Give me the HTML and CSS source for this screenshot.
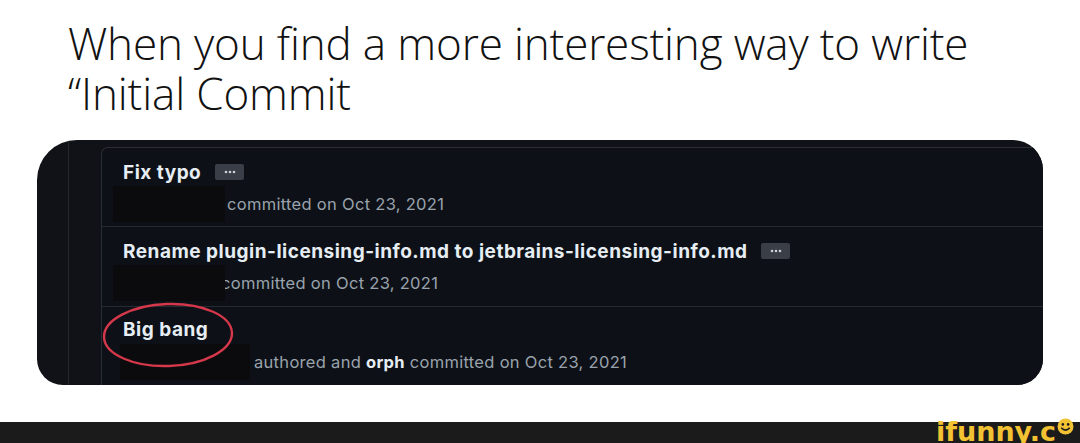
FILE: index.html
```html
<!DOCTYPE html>
<html>
<head>
<meta charset="utf-8">
<link rel="stylesheet" href="styles.css">
</head>
<body>
<div class="page">
  <h1 class="title"><span class="tline">When you find a more interesting way to write</span><span class="tline">“Initial Commit</span></h1>
  <div class="panel">
    <div class="strip"></div>
    <div class="gutter"></div>
    <div class="list">
      <div class="row">
        <div class="head"><span class="msg">Fix typo</span><span class="more"><svg width="12" height="4" viewBox="0 0 12 4"><circle cx="2" cy="2" r="1.3"/><circle cx="6" cy="2" r="1.3"/><circle cx="10" cy="2" r="1.3"/></svg></span></div>
        <div class="meta"><span class="redact r1"></span><span class="mtext">committed on Oct 23, 2021</span></div>
      </div>
      <div class="row">
        <div class="head"><span class="msg">Rename plugin-licensing-info.md to jetbrains-licensing-info.md</span><span class="more"><svg width="12" height="4" viewBox="0 0 12 4"><circle cx="2" cy="2" r="1.3"/><circle cx="6" cy="2" r="1.3"/><circle cx="10" cy="2" r="1.3"/></svg></span></div>
        <div class="meta"><span class="mtext m2">committed on Oct 23, 2021</span><span class="redact r2"></span></div>
      </div>
      <div class="row last">
        <div class="head"><span class="msg">Big bang</span></div>
        <div class="meta"><span class="redact r3"></span><span class="mtext">authored and <b>orph</b> committed on Oct 23, 2021</span></div>
        <svg class="circle" width="134" height="68" viewBox="0 0 134 68"><ellipse cx="67" cy="34" rx="64" ry="31" transform="rotate(-2 67 34)"/></svg>
      </div>
    </div>
  </div>
  <div class="spacer"></div>
  <div class="bar"><span class="logo">ifunny.c<svg class="smile" width="17" height="17" viewBox="0 0 16 16"><circle cx="8" cy="8" r="7.5" fill="#f3c233"/><circle cx="5.5" cy="6" r="1.2" fill="#1b1b1b"/><circle cx="10.5" cy="6" r="1.2" fill="#1b1b1b"/><path d="M4 9.2 Q8 13.5 12 9.2" stroke="#1b1b1b" stroke-width="1.6" fill="none"/></svg></span></div>
</div>
</body>
</html>
```

FILE: styles.css
```css
* { box-sizing: border-box; }
html, body { margin: 0; padding: 0; background: #fff; }
.page { width: 1080px; height: 443px; display: flex; flex-direction: column; overflow: hidden; }
.title {
  margin: 0;
  padding: 18px 0 0 68px;
  height: 140px;
  font-family: "Open Sans", sans-serif;
  font-weight: 300;
  font-size: 44px;
  letter-spacing: -0.15px;
  color: #111;
}
.tline { display: block; height: 50px; line-height: 50px; }
.panel {
  margin-left: 37px;
  width: 1006px;
  height: 245px;
  background: #101217;
  border-radius: 40px 30px 26px 26px;
  overflow: hidden;
  display: flex;
}
.strip { width: 32px; border-right: 1px solid #22262d; }
.gutter { width: 32px; }
.list {
  flex: 1;
  margin-top: 7px;
  border-left: 1px solid #2a2f36;
  border-top: 1px solid #2a2f36;
  border-top-left-radius: 7px;
  background: #0d1117;
  display: flex;
  flex-direction: column;
}
.row {
  position: relative;
  height: 79px;
  border-bottom: 1px solid #262b32;
  padding: 12px 0 0 21px;
  font-family: Inter, "Liberation Sans", sans-serif;
}
.row + .row { height: 80px; }
.row.last { border-bottom: none; flex: 1; padding-top: 10px; }
.head { display: flex; align-items: center; height: 24px; }
.msg { color: #e6edf3; font-weight: 700; font-size: 19px; letter-spacing: 0.5px; }
.more {
  margin-left: 14px;
  width: 29px;
  height: 16px;
  background: #3a3e46;
  border-radius: 2px;
  display: flex;
  align-items: center;
  justify-content: center;
}
.more svg { fill: #c9d1d9; }
.meta { display: flex; align-items: center; height: 36px; margin-top: 2px; }
.mtext { color: #9aa3ad; font-size: 16.5px; letter-spacing: 0.3px; }
.mtext b { color: #e6edf3; font-weight: 700; }
.redact { display: block; height: 36px; background: #0b0b0d; }
.r1 { width: 112px; margin-left: -10px; margin-right: 2px; }
.m2 { margin-left: 101px; }
.r2 { order: -1; width: 112px; margin-left: -10px; margin-right: -105px; position: relative; }
.r3 { width: 130px; margin-left: -3px; margin-right: 4px; }
.last .meta { margin-top: 3px; }
.circle { position: absolute; left: -1px; top: -6px; }
.circle ellipse { fill: none; stroke: #d4384a; stroke-width: 2.4; }
.spacer { flex: 1; }
.bar {
  height: 21px;
  background: #1b1b1b;
  display: flex;
  justify-content: flex-end;
  padding-right: 6px;
}
.logo {
  display: flex;
  align-items: flex-start;
  margin-top: -4px;
  font-family: "DejaVu Sans", sans-serif;
  font-weight: 800;
  font-size: 27px;
  line-height: 27px;
  height: 25px;
  color: #f3c233;
  letter-spacing: 0px;
}
.smile { margin-left: 1px; margin-top: 0px; }
```
